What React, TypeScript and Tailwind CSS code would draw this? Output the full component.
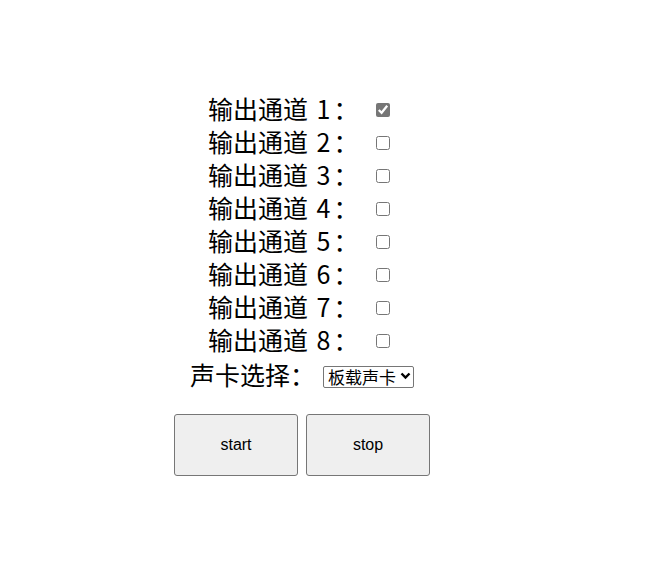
import React from "react";

const font = { fontFamily: '"Microsoft YaHei", "Noto Sans CJK SC", sans-serif' };

export default function App() {
  const channels = [1, 2, 3, 4, 5, 6, 7, 8];
  return (
    <div className="w-[654px] h-[565px] bg-white pt-[93px] text-black" style={font}>
      <div className="flex flex-col">
        {channels.map((n) => (
          <div key={n} className="flex items-center h-[33px] pl-[208px]">
            <span className="w-[168px] shrink-0 whitespace-nowrap text-[25px] leading-[33px] pb-[2px]">
              输出通道 <span className="ml-[3px]">{n}</span>
              <span className="ml-[3px]">：</span>
            </span>
            <input
              type="checkbox"
              defaultChecked={n === 1}
              className="w-[14px] h-[14px] m-0 mt-[1px] accent-[#767676]"
            />
          </div>
        ))}
        <div className="flex items-center h-[38px] pl-[190px]">
          <span className="w-[133px] shrink-0 whitespace-nowrap text-[25px] leading-[33px] pb-[3px]">
            声卡选择：
          </span>
          <div className="relative w-[91px] h-[22px]">
            <select className="appearance-none w-[91px] h-[22px] border border-[#767676] rounded-[2px] bg-white pl-[4px] text-[17px] leading-[20px] text-black">
              <option>板载声卡</option>
            </select>
            <svg
              className="absolute right-[3px] top-[7px] pointer-events-none"
              width="11"
              height="8"
              viewBox="0 0 11 8"
            >
              <path d="M1.5 1.5 L5.5 5.5 L9.5 1.5" fill="none" stroke="#000" strokeWidth="2.4" />
            </svg>
          </div>
        </div>
        <div className="flex gap-[8px] pl-[174px] mt-[19px]">
          <button className="w-[124px] h-[62px] bg-[#efefef] border border-[#767676] rounded-[3px] text-[16px] text-black" style={{ fontFamily: '"Liberation Sans", Arial, sans-serif' }}>
            start
          </button>
          <button className="w-[124px] h-[62px] bg-[#efefef] border border-[#767676] rounded-[3px] text-[16px] text-black" style={{ fontFamily: '"Liberation Sans", Arial, sans-serif' }}>
            stop
          </button>
        </div>
      </div>
    </div>
  );
}
